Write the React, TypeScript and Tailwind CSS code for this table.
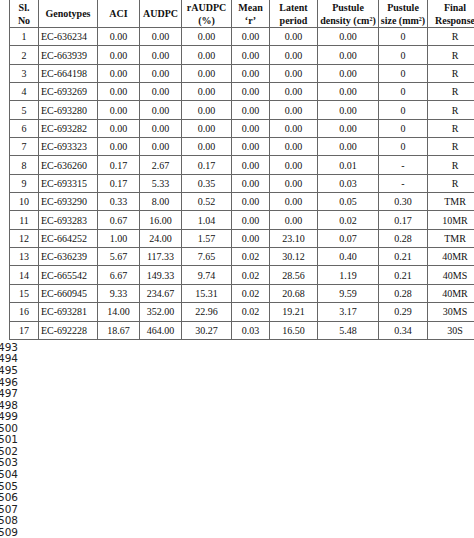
const rows: string[][] = [
  ["1", "EC-636234", "0.00", "0.00", "0.00", "0.00", "0.00", "0.00", "0", "R"],
  ["2", "EC-663939", "0.00", "0.00", "0.00", "0.00", "0.00", "0.00", "0", "R"],
  ["3", "EC-664198", "0.00", "0.00", "0.00", "0.00", "0.00", "0.00", "0", "R"],
  ["4", "EC-693269", "0.00", "0.00", "0.00", "0.00", "0.00", "0.00", "0", "R"],
  ["5", "EC-693280", "0.00", "0.00", "0.00", "0.00", "0.00", "0.00", "0", "R"],
  ["6", "EC-693282", "0.00", "0.00", "0.00", "0.00", "0.00", "0.00", "0", "R"],
  ["7", "EC-693323", "0.00", "0.00", "0.00", "0.00", "0.00", "0.00", "0", "R"],
  ["8", "EC-636260", "0.17", "2.67", "0.17", "0.00", "0.00", "0.01", "-", "R"],
  ["9", "EC-693315", "0.17", "5.33", "0.35", "0.00", "0.00", "0.03", "-", "R"],
  ["10", "EC-693290", "0.33", "8.00", "0.52", "0.00", "0.00", "0.05", "0.30", "TMR"],
  ["11", "EC-693283", "0.67", "16.00", "1.04", "0.00", "0.00", "0.02", "0.17", "10MR"],
  ["12", "EC-664252", "1.00", "24.00", "1.57", "0.00", "23.10", "0.07", "0.28", "TMR"],
  ["13", "EC-636239", "5.67", "117.33", "7.65", "0.02", "30.12", "0.40", "0.21", "40MR"],
  ["14", "EC-665542", "6.67", "149.33", "9.74", "0.02", "28.56", "1.19", "0.21", "40MS"],
  ["15", "EC-660945", "9.33", "234.67", "15.31", "0.02", "20.68", "9.59", "0.28", "40MR"],
  ["16", "EC-693281", "14.00", "352.00", "22.96", "0.02", "19.21", "3.17", "0.29", "30MS"],
  ["17", "EC-692228", "18.67", "464.00", "30.27", "0.03", "16.50", "5.48", "0.34", "30S"],
];

const lineNumbers = Array.from({ length: 17 }, (_, i) => 493 + i);

const App = () => {
  return (
    <div className="w-[474px] h-[538px] overflow-hidden bg-white">
      <div className="pl-[9px] -mt-[6px]">
        <table className="table-fixed border-collapse w-[473px] text-[10px] leading-[13px] text-[#111] font-['Liberation_Serif',serif]">
          <colgroup>
            <col className="w-[29px]" />
            <col className="w-[59px]" />
            <col className="w-[42px]" />
            <col className="w-[42px]" />
            <col className="w-[50px]" />
            <col className="w-[38px]" />
            <col className="w-[48px]" />
            <col className="w-[61px]" />
            <col className="w-[49px]" />
            <col className="w-[55px]" />
          </colgroup>
          <thead>
            <tr className="h-[33px] font-bold">
              <th className="border border-[#666] p-0 pt-[5px] font-bold">
                Sl.
                <br />
                No
              </th>
              <th className="border border-[#666] p-0 pt-[5px] font-bold">Genotypes</th>
              <th className="border border-[#666] p-0 pt-[5px] font-bold">ACI</th>
              <th className="border border-[#666] p-0 pt-[5px] font-bold">AUDPC</th>
              <th className="border border-[#666] p-0 pt-[5px] font-bold">
                rAUDPC
                <br />
                (%)
              </th>
              <th className="border border-[#666] p-0 pt-[5px] font-bold">
                Mean
                <br />
                ‘r’
              </th>
              <th className="border border-[#666] p-0 pt-[5px] font-bold">
                Latent
                <br />
                period
              </th>
              <th className="border border-[#666] p-0 pt-[5px] font-bold whitespace-nowrap">
                Pustule
                <br />
                density (cm<sup className="text-[6px]">2</sup>)
              </th>
              <th className="border border-[#666] p-0 pt-[5px] font-bold whitespace-nowrap">
                Pustule
                <br />
                size (mm<sup className="text-[6px]">2</sup>)
              </th>
              <th className="border border-[#666] p-0 pt-[5px] font-bold whitespace-nowrap">
                Final
                <br />
                Response
              </th>
            </tr>
          </thead>
          <tbody>
            {rows.map((row, index) => (
              <tr className="h-[18.35px]" key={index}>
                {row.map((cell, i) => (
                  <td
                    key={i}
                    className={
                      i === 1
                        ? "border border-[#666] p-0 pl-[2px] text-left"
                        : "border border-[#666] p-0 text-center"
                    }
                  >
                    {cell}
                  </td>
                ))}
              </tr>
            ))}
          </tbody>
        </table>
      </div>
      <div className="mt-[2px] -ml-[2px] text-[10.5px] leading-[11.56px] text-[#222] font-['DejaVu_Sans',sans-serif]">
        {lineNumbers.map((n) => (
          <div key={n}>{n}</div>
        ))}
      </div>
    </div>
  );
};

export default App;
